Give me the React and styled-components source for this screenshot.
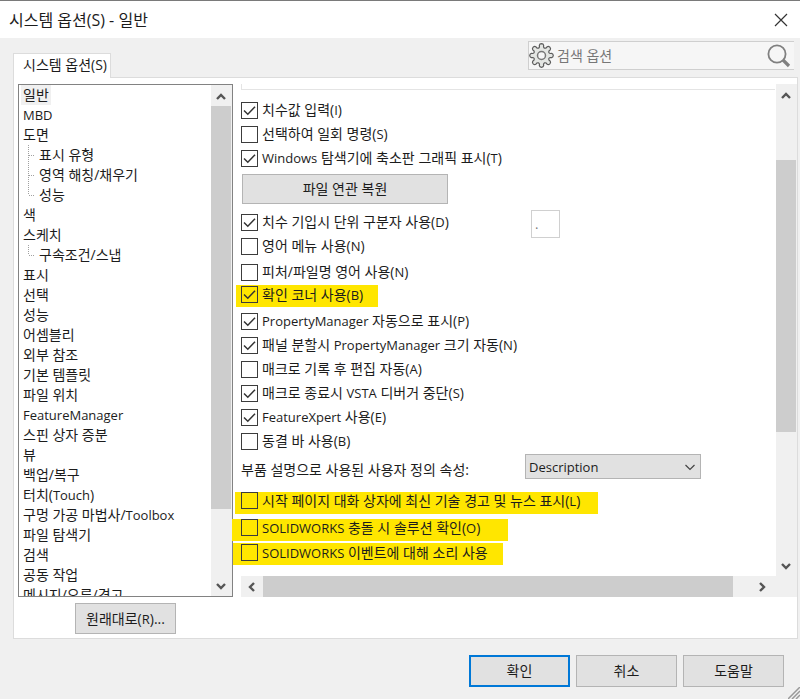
import React from "react";
import styled, { createGlobalStyle, css } from "styled-components";

const GlobalStyle = createGlobalStyle`
  *, *::before, *::after { box-sizing: border-box; }
  body { margin: 0; background: #f0f0f0; }
  body, button, input, select {
    font-family: "Open Sans", "Noto Sans CJK KR", sans-serif;
    font-size: 14px;
    color: #1c1c1c;
  }
  ul { list-style: none; margin: 0; padding: 0; }
`;

const Dialog = styled.main`
  display: flex;
  flex-direction: column;
  height: 100vh;
  min-height: 600px;
  overflow: hidden;
  border-top: 1px solid #7a7a7a;
  background: #f0f0f0;
`;

const TitleBar = styled.header`
  display: flex;
  align-items: center;
  justify-content: space-between;
  flex: none;
  height: 37px;
  padding: 0 12px 0 9px;
  background: #fff;
`;

const Title = styled.h1`
  margin: 0;
  font-size: 16px;
  font-weight: 400;
  line-height: 20px;
`;

const Latin = styled.span`
  font-size: 13px;
`;

const IconButton = styled.button`
  display: grid;
  place-items: center;
  flex: none;
  padding: 0;
  border: 0;
  background: none;
`;

const TopRow = styled.div`
  display: flex;
  align-items: flex-end;
  justify-content: space-between;
  flex: none;
  height: 39px;
  padding: 0 6px 0 13px;
`;

const Tab = styled.button`
  position: relative;
  z-index: 1;
  height: 25px;
  margin-bottom: -1px;
  padding: 0 3px 2px 9px;
  border: 1px solid #dcdcdc;
  border-bottom: 0;
  background: #fff;
  line-height: 20px;
  white-space: nowrap;
`;

const SearchBox = styled.label`
  display: flex;
  align-items: center;
  width: 266px;
  height: 29px;
  margin-bottom: 7px;
  padding-right: 3px;
  border: 1px solid #cfcfcf;
  border-right: 0;
  background: #f6f6f6;
`;

const SearchInput = styled.input`
  flex: 1;
  min-width: 0;
  padding: 0 3px;
  border: 0;
  outline: 0;
  background: none;
  &::placeholder { color: #777; opacity: 1; }
`;

const Panel = styled.section`
  display: grid;
  grid-template-columns: 215px minmax(0, 1fr);
  grid-template-rows: minmax(0, 1fr) 31px;
  column-gap: 8px;
  row-gap: 6px;
  flex: 1;
  min-height: 0;
  margin: 0 2px 0 13px;
  padding: 6px 0 4px 4px;
  border: 1px solid #dcdcdc;
  background: #fff;
`;

const ListFrame = styled.nav`
  display: flex;
  min-height: 0;
  border: 1px solid #828282;
`;

const List = styled.ul`
  flex: 1;
  min-width: 0;
  overflow: hidden;
`;

const ListItem = styled.button`
  display: block;
  height: 20px;
  margin-left: 2px;
  padding: 0 2px;
  border: 0;
  background: ${(p) => (p.$selected ? "#f0f0f0" : "none")};
  line-height: 20px;
  white-space: nowrap;
`;

const Branch = styled.li`
  display: flex;
  align-items: center;
  padding-left: 7px;
`;

const BranchLine = styled.svg`
  flex: none;
  width: 9px;
  height: 20px;
`;

const ScrollBar = styled.div`
  display: flex;
  flex: none;
  flex-direction: ${(p) => (p.$horizontal ? "row" : "column")};
  background: #f0f0f0;
  ${(p) => (p.$horizontal
    ? css`height: 21px; padding-right: 3px;`
    : css`width: 21px; padding-right: 1px;`)}
`;

const ScrollArrow = styled(IconButton)`
  width: ${(p) => (p.$horizontal ? 22 : 20)}px;
  height: 21px;
`;

const Track = styled.div`
  flex: ${(p) => p.$size} 1 0;
  background: ${(p) => (p.$thumb ? "#cdcdcd" : "transparent")};
`;

const Content = styled.div`
  display: grid;
  grid-template-columns: minmax(0, 1fr) 21px;
  grid-template-rows: minmax(0, 1fr) 21px;
  min-height: 0;
  background: #f0f0f0;
`;

const Options = styled.div`
  display: flex;
  flex-direction: column;
  align-items: flex-start;
  min-height: 0;
  background: #fff;
`;

const GroupEnd = styled.div`
  align-self: stretch;
  flex: none;
  height: 6px;
  margin: 0 1px 8px 0;
  border: 1px solid #e4e4e4;
  border-width: 0 0 1px 1px;
`;

const Option = styled.label`
  display: flex;
  align-items: center;
  flex: none;
  gap: 4px;
  height: 24px;
  margin-top: ${(p) => p.$gap || 0}px;
  line-height: 20px;
  white-space: nowrap;
  ${(p) => p.$mark && css`
    height: 22px;
    align-items: flex-start;
    margin-left: -${p.$mark[0]}px;
    padding: ${p.$mark[2]}px ${p.$mark[1]}px 0 ${p.$mark[0]}px;
    background: #ffe600;
    line-height: 18px;
  `}
`;

const CheckCell = styled.span`
  display: grid;
  width: 17px;
  height: 17px;
  > * { grid-area: 1 / 1; width: 17px; height: 17px; }
  input:not(:checked) + svg { visibility: hidden; }
`;

const CheckInput = styled.input`
  appearance: none;
  margin: 0;
  border: 1px solid #3c3c3c;
  background: ${(p) => (p.$mark ? "transparent" : "#fff")};
`;

const CheckMark = styled.svg`
  pointer-events: none;
`;

const FieldRow = styled.div`
  display: flex;
  align-items: flex-start;
  flex: none;
  height: ${(p) => p.$height}px;
  margin-top: ${(p) => p.$gap}px;
`;

const FieldLabel = styled.div`
  flex: none;
  width: ${(p) => p.$width}px;
  white-space: nowrap;
`;

const Caption = styled.label`
  display: block;
  padding-top: 6px;
  line-height: 20px;
`;

const SmallInput = styled.input`
  width: 29px;
  height: 28px;
  padding: 0 3px;
  border: 1px solid #d0d0d0;
  background: #fff;
  color: #777;
  font-size: 13px;
`;

const SelectBox = styled.div`
  display: grid;
  align-items: center;
  width: 176px;
  > * { grid-area: 1 / 1; }
  svg { justify-self: end; margin-right: 5px; pointer-events: none; }
`;

const Select = styled.select`
  appearance: none;
  height: 25px;
  padding: 0 3px;
  border: 1px solid #b4b4b4;
  border-radius: 0;
  background: #e1e1e1;
  font-size: 13px;
`;

const Button = styled.button`
  width: ${(p) => p.$width}px;
  height: ${(p) => p.$height || 31}px;
  padding: 0;
  border: ${(p) => (p.$primary ? "2px solid #0078d7" : "1px solid #b4b4b4")};
  background: #e1e1e1;
  line-height: 20px;
`;

const FileButton = styled(Button)`
  flex: none;
  margin: 4px 0 6px 1px;
`;

const ResetButton = styled(Button)`
  margin-left: 57px;
`;

const Footer = styled.footer`
  display: flex;
  align-items: center;
  justify-content: flex-end;
  flex: none;
  gap: 6px;
  height: 60px;
  padding: 4px 16px 0;
`;

const Grip = styled.svg`
  position: fixed;
  right: 0;
  bottom: 0;
`;

const arrows = {
  up: "M2 9 L6 5 L10 9",
  down: "M2 4 L6 8 L10 4",
  left: "M8 2 L4 6 L8 10",
  right: "M4 2 L8 6 L4 10",
};

/* Latin words are set one pixel smaller than the Hangul beside them. */
function Text({ children }) {
  return children
    .split(/([A-Za-z]+)/)
    .map((part, i) => (i % 2 ? <Latin key={i}>{part}</Latin> : part));
}

function Arrow({ dir, label, horizontal }) {
  return (
    <ScrollArrow aria-label={label} $horizontal={horizontal}>
      <svg width="12" height="12" viewBox="0 0 12 12" fill="none" stroke="#555" strokeWidth="2.4">
        <path d={arrows[dir]} />
      </svg>
    </ScrollArrow>
  );
}

function Scroller({ horizontal, before, thumb, after }) {
  return (
    <ScrollBar $horizontal={horizontal}>
      <Arrow horizontal={horizontal} dir={horizontal ? "left" : "up"} label={horizontal ? "왼쪽으로" : "위로"} />
      {before > 0 && <Track $size={before} />}
      <Track $size={thumb} $thumb />
      <Track $size={after} />
      <Arrow horizontal={horizontal} dir={horizontal ? "right" : "down"} label={horizontal ? "오른쪽으로" : "아래로"} />
    </ScrollBar>
  );
}

function gearPath(cx, cy) {
  let d = "";
  for (let i = 0; i < 8; i++) {
    const at = (deg, r) => {
      const a = ((i * 45 + deg - 90) * Math.PI) / 180;
      return `${(cx + r * Math.cos(a)).toFixed(2)} ${(cy + r * Math.sin(a)).toFixed(2)}`;
    };
    d += `${i ? "L" : "M"}${at(-13, 9)} L${at(-12, 10.4)} Q${at(-9, 11.8)} ${at(0, 11.8)} Q${at(9, 11.8)} ${at(12, 10.4)} L${at(13, 9)} Q${at(22.5, 7)} ${at(32, 9)} `;
  }
  return d + "Z";
}

function GearIcon() {
  return (
    <svg width="25" height="26" viewBox="0 0 25 26" fill="#e4e6e3" stroke="#5c5c5c" strokeWidth="1.2">
      <path d={gearPath(12.5, 12.5)} />
      <circle cx="12.5" cy="12.5" r="4" fill="#f6f6f6" stroke="#777" strokeWidth="1.5" />
    </svg>
  );
}

function SearchIcon() {
  return (
    <svg width="24" height="24" viewBox="0 0 24 24" fill="none" stroke="#808080">
      <circle cx="10" cy="10" r="8.6" strokeWidth="1.8" />
      <path d="M16 16 L22 22" strokeWidth="3.2" />
    </svg>
  );
}

function Check({ children, checked, gap, mark }) {
  return (
    <Option $gap={gap} $mark={mark}>
      <CheckCell>
        <CheckInput type="checkbox" defaultChecked={checked} $mark={mark} />
        <CheckMark viewBox="0 0 17 17" fill="none" stroke="#333" strokeWidth="1.5">
          <path d="M3 8.5 L6.8 12.2 L14 4.8" />
        </CheckMark>
      </CheckCell>
      <span><Text>{children}</Text></span>
    </Option>
  );
}

const categories = [
  { name: "일반" },
  { name: "MBD" },
  { name: "도면", children: ["표시 유형", "영역 해칭/채우기", "성능"] },
  { name: "색" },
  { name: "스케치", children: ["구속조건/스냅"] },
  ...[
    "표시", "선택", "성능", "어셈블리", "외부 참조", "기본 템플릿", "파일 위치",
    "FeatureManager", "스핀 상자 증분", "뷰", "백업/복구", "터치(Touch)",
    "구멍 가공 마법사/Toolbox", "파일 탐색기", "검색", "공동 작업", "메시지/오류/경고",
  ].map((name) => ({ name })),
];

function CategoryList() {
  return (
    <ListFrame aria-label="옵션 범주">
      <List>
        {categories.map((c, i) => (
          <li key={i}>
            <ListItem $selected={i === 0}><Text>{c.name}</Text></ListItem>
            {c.children && (
              <ul>
                {c.children.map((name, j) => (
                  <Branch key={name}>
                    <BranchLine viewBox="0 0 9 20" stroke="#a0a0a0" strokeDasharray="1 1" fill="none">
                      <path d={j === c.children.length - 1 ? "M2.5 0 V10" : "M2.5 0 V20"} />
                      <path d="M3 10.5 H9" />
                    </BranchLine>
                    <ListItem><Text>{name}</Text></ListItem>
                  </Branch>
                ))}
              </ul>
            )}
          </li>
        ))}
      </List>
      <Scroller thumb={404} after={66} />
    </ListFrame>
  );
}

export default function App() {
  return (
    <>
      <GlobalStyle />
      <Dialog>
        <TitleBar>
          <Title>시스템 옵션(S) - 일반</Title>
          <IconButton aria-label="닫기">
            <svg width="14" height="14" viewBox="0 0 14 14" stroke="#333" strokeWidth="1.2">
              <path d="M1 1 L13 13 M13 1 L1 13" />
            </svg>
          </IconButton>
        </TitleBar>
        <TopRow>
          <Tab role="tab" aria-selected="true">시스템 옵션(S)</Tab>
          <SearchBox>
            <GearIcon />
            <SearchInput placeholder="검색 옵션" aria-label="검색 옵션" />
            <SearchIcon />
          </SearchBox>
        </TopRow>
        <Panel>
          <CategoryList />
          <Content>
            <Options>
              <GroupEnd />
              <Check checked>치수값 입력(I)</Check>
              <Check>선택하여 일회 명령(S)</Check>
              <Check checked>Windows 탐색기에 축소판 그래픽 표시(T)</Check>
              <FileButton $width={206} $height={30}>파일 연관 복원</FileButton>
              <FieldRow $height={24} $gap={0}>
                <FieldLabel $width={290}>
                  <Check checked>치수 기입시 단위 구분자 사용(D)</Check>
                </FieldLabel>
                <SmallInput defaultValue="." aria-label="단위 구분자" />
              </FieldRow>
              <Check>영어 메뉴 사용(N)</Check>
              <Check gap={2}>피처/파일명 영어 사용(N)</Check>
              <Check checked gap={1} mark={[5, 15, 1]}>확인 코너 사용(B)</Check>
              <Check checked gap={2}>PropertyManager 자동으로 표시(P)</Check>
              <Check checked>패널 분할시 PropertyManager 크기 자동(N)</Check>
              <Check>매크로 기록 후 편집 자동(A)</Check>
              <Check checked>매크로 종료시 VSTA 디버거 중단(S)</Check>
              <Check checked>FeatureXpert 사용(E)</Check>
              <Check>동결 바 사용(B)</Check>
              <FieldRow $height={25} $gap={1}>
                <FieldLabel $width={284}>
                  <Caption htmlFor="part-property">부품 설명으로 사용된 사용자 정의 속성:</Caption>
                </FieldLabel>
                <SelectBox>
                  <Select id="part-property"><option>Description</option></Select>
                  <svg width="12" height="12" viewBox="0 0 12 12" fill="none" stroke="#444" strokeWidth="1.2">
                    <path d="M1.5 4 L6 8.5 L10.5 4" />
                  </svg>
                </SelectBox>
              </FieldRow>
              <Check gap={13} mark={[6, 18, 0]}>시작 페이지 대화 상자에 최신 기술 경고 및 뉴스 표시(L)</Check>
              <Check gap={5} mark={[9, 28, 0]}>SOLIDWORKS 충돌 시 솔루션 확인(O)</Check>
              <Check gap={2} mark={[8, 15, 1]}>SOLIDWORKS 이벤트에 대해 소리 사용</Check>
            </Options>
            <Scroller before={55} thumb={272} after={123} />
            <Scroller horizontal thumb={470} after={18} />
          </Content>
          <ResetButton $width={101}><Text>원래대로(R)...</Text></ResetButton>
        </Panel>
        <Footer>
          <Button $width={101} $height={32} $primary>확인</Button>
          <Button $width={101} $height={32}>취소</Button>
          <Button $width={101} $height={32}>도움말</Button>
        </Footer>
        <Grip width="12" height="12" viewBox="0 0 12 12" stroke="#999" strokeWidth="1.5">
          <path d="M0 12 L12 0 M4 12 L12 4 M8 12 L12 8" />
        </Grip>
      </Dialog>
    </>
  );
}
